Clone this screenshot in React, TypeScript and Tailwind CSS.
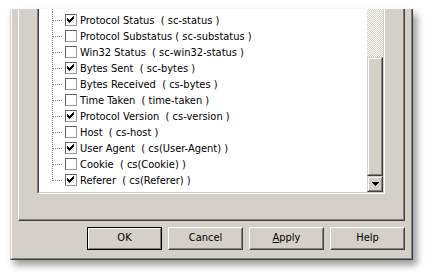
import React from 'react';

const rows: { checked: boolean; label: string }[] = [
  { checked: true, label: 'Protocol Status  ( sc-status )' },
  { checked: false, label: 'Protocol Substatus ( sc-substatus )' },
  { checked: false, label: 'Win32 Status  ( sc-win32-status )' },
  { checked: true, label: 'Bytes Sent  ( sc-bytes )' },
  { checked: false, label: 'Bytes Received  ( cs-bytes )' },
  { checked: false, label: 'Time Taken  ( time-taken )' },
  { checked: true, label: 'Protocol Version  ( cs-version )' },
  { checked: false, label: 'Host  ( cs-host )' },
  { checked: true, label: 'User Agent  ( cs(User-Agent) )' },
  { checked: false, label: 'Cookie  ( cs(Cookie) )' },
  { checked: true, label: 'Referer  ( cs(Referer) )' },
];

const font = 'font-["DejaVu_Sans_Condensed","DejaVu_Sans",sans-serif] text-[11px]';

// classic 7-column check mark, each column 3px tall
const checkCols = [3, 4, 5, 4, 3, 2, 1];

const Connector = ({ last, height = 16 }: { last?: boolean; height?: number }) => (
  <svg width="13" height={height} className="shrink-0" shapeRendering="crispEdges">
    <line x1="0.5" y1="0" x2="0.5" y2={last ? 9 : height} stroke="#808080" strokeDasharray="1 1" />
    {height === 16 && <line x1="1" y1="8.5" x2="11" y2="8.5" stroke="#808080" strokeDasharray="1 1" />}
  </svg>
);

const CheckBox = ({ checked }: { checked: boolean }) => (
  <div className="w-[12px] h-[12px] shrink-0 bg-white border border-t-[#5f5f5f] border-l-[#5f5f5f] border-r-[#9a9a9a] border-b-[#9a9a9a]">
    {checked && (
      <svg width="10" height="10" shapeRendering="crispEdges">
        {checkCols.map((top, i) => (
          <rect key={i} x={i + 1} y={top} width="1" height="3" fill="#000" />
        ))}
      </svg>
    )}
  </div>
);

const Raised = ({ children, className = '' }: { children?: React.ReactNode; className?: string }) => (
  <div className={`border border-t-white border-l-white border-r-[#404040] border-b-[#404040] ${className}`}>
    <div className="w-full h-full border border-t-[#d4d0c8] border-l-[#d4d0c8] border-r-[#808080] border-b-[#808080] flex items-center justify-center">
      {children}
    </div>
  </div>
);

const Button = ({ children, isDefault }: { children: React.ReactNode; isDefault?: boolean }) =>
  isDefault ? (
    <div className="w-[75px] h-[23px] border border-black">
      <div className="w-full h-full border border-t-white border-l-white border-r-[#808080] border-b-[#808080] flex items-center justify-center text-black">
        {children}
      </div>
    </div>
  ) : (
    <Raised className="w-[75px] h-[23px] text-black">{children}</Raised>
  );

export default function App() {
  return (
    <div className={`w-[432px] h-[278px] bg-white pt-[9px] pl-[10px] overflow-hidden ${font}`}>
      {/* dialog */}
      <div className="w-[403px] h-[251px] border-l border-r border-b border-l-[#d4d0c8] border-r-[#404040] border-b-[#404040] shadow-[4px_5px_7px_rgba(0,0,0,0.4)]">
        <div className="h-full border-l border-r border-b border-l-white border-r-[#808080] border-b-[#808080] bg-[#d4d0c8] px-[6px] flex flex-col">
          {/* tab page */}
          <div className="h-[212px] border-l border-r border-b border-l-white border-r-[#404040] border-b-[#404040]">
            <div className="h-full border-r border-b border-r-[#808080] border-b-[#808080] px-[18px]">
              {/* listbox */}
              <div className="w-[348px] h-[185px] border-l border-r border-b border-l-[#808080] border-r-white border-b-white">
                <div className="h-full border-l border-r border-b border-l-[#404040] border-r-[#d4d0c8] border-b-[#d4d0c8] flex">
                  <div className="flex-1 bg-white overflow-hidden">
                    <div className="flex pl-[13px]">
                      <Connector height={3} />
                    </div>
                    {rows.map((r, i) => (
                      <div key={r.label} className="flex items-center h-[16px] pl-[13px]">
                        <Connector last={i === rows.length - 1} />
                        <CheckBox checked={r.checked} />
                        <span className="ml-[3px] whitespace-pre text-black leading-none">{r.label}</span>
                      </div>
                    ))}
                  </div>
                  {/* scrollbar */}
                  <div className="w-[16px] flex flex-col">
                    <div className="flex-1 bg-[image:repeating-conic-gradient(#d4d0c8_0%_25%,#ffffff_0%_50%)] bg-[length:2px_2px]" />
                    <div className="h-[119px] border border-t-[#d4d0c8] border-l-[#d4d0c8] border-r-[#404040] border-b-[#404040]">
                      <div className="h-full border border-t-white border-l-white border-r-[#808080] border-b-[#808080] bg-[#d4d0c8]" />
                    </div>
                    <div className="h-[16px] border border-t-[#d4d0c8] border-l-[#d4d0c8] border-r-[#404040] border-b-[#404040]">
                      <div className="h-full border border-t-white border-l-white border-r-[#808080] border-b-[#808080] bg-[#d4d0c8] flex items-center justify-center">
                        <svg width="7" height="4" shapeRendering="crispEdges">
                          <polygon points="0,0 7,0 3.5,4" fill="#000" />
                        </svg>
                      </div>
                    </div>
                  </div>
                </div>
              </div>
            </div>
          </div>
          {/* buttons */}
          <div className="mt-[6px] flex justify-end gap-[6px]">
            <Button isDefault>OK</Button>
            <Button>Cancel</Button>
            <Button>
              <span>
                <span className="underline underline-offset-[1px]">A</span>pply
              </span>
            </Button>
            <Button>Help</Button>
          </div>
        </div>
      </div>
    </div>
  );
}
